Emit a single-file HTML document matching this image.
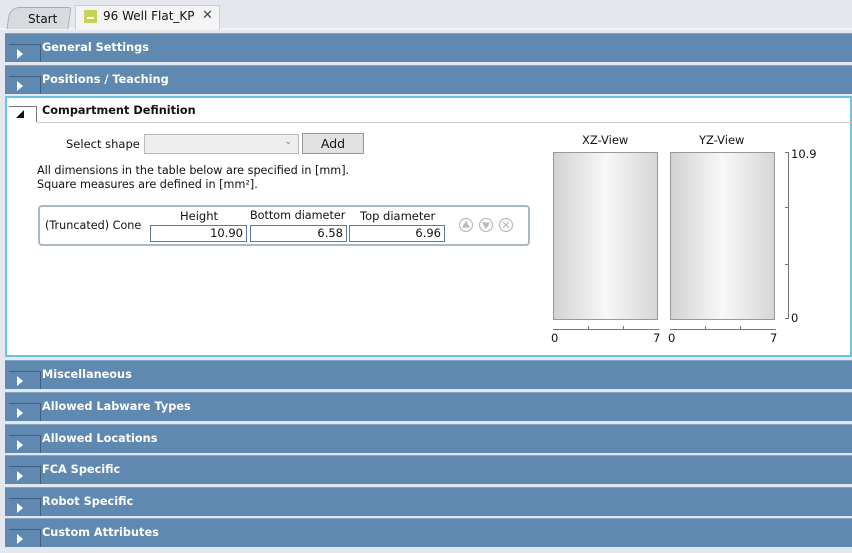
<!DOCTYPE html>
<html><head><style>
*{margin:0;padding:0;box-sizing:border-box}
body{width:852px;height:553px;background:#e4e7ee;font-family:"DejaVu Sans","Liberation Sans",sans-serif;font-size:11.5px;color:#111;position:relative;overflow:hidden}
.a{position:absolute}
.hdr{position:absolute;left:5px;width:847px;height:29px;background:#5f89b0;border-top:1px solid #7fa3c4}
.hdr .t{position:absolute;left:37px;top:7px;color:#fff;font-weight:bold;font-size:11.3px}
.hdr .b{position:absolute;left:4px;top:10px;width:32px;height:18px;border-top:1px solid #3f607f;border-right:1px solid #3f607f}
.hdr .b:after{content:"";position:absolute;left:8px;top:4px;border-left:6px solid #fff;border-top:5px solid transparent;border-bottom:5px solid transparent}
.inp{position:absolute;height:17px;border:1px solid #5a7a9a;background:#fff;text-align:right;padding-right:3px;font-size:11.5px;line-height:15px}
.view{position:absolute;top:152px;width:105px;height:168px;border:1px solid #999;background:linear-gradient(90deg,#d2d2d2,#f8f8f8 50%,#d6d6d6)}
</style></head><body>
<div class="a" style="left:0;top:28px;width:852px;height:2px;background:#f4f4f4"></div>
<div class="a" style="left:8px;top:7px;width:62px;height:22px;background:#d8dade;border:1px solid #a8acb2;border-bottom:none;border-radius:10px 3px 0 0;transform:skewX(-8deg)"></div>
<div class="a" style="left:28px;top:12px;font-size:12px">Start</div>
<div class="a" style="left:75px;top:5px;width:145px;height:25px;background:#f4f4f4;border:1px solid #ccc;border-bottom:none"></div>
<div class="a" style="left:84px;top:10px;width:13px;height:13px;background:#c9d15a;border-radius:1px"><div style="margin:7px 3px 0;height:2px;background:#fff"></div></div>
<div class="a" style="left:103px;top:9px;font-size:12px">96 Well Flat_KP</div>
<div class="a" style="left:202px;top:8px;font-size:13px;color:#444">✕</div>

<div class="hdr" style="top:33px"><div class="b"></div><div class="t">General Settings</div></div>
<div class="hdr" style="top:65px"><div class="b"></div><div class="t">Positions / Teaching</div></div>

<div class="a" style="left:5px;top:96px;width:847px;height:261px;background:#fff;border:2px solid #68c2e4"></div>
<div class="a" style="left:9px;top:106px;width:28px;height:16px;border-top:1px solid #777;border-right:1px solid #777"></div>
<div class="a" style="left:16px;top:110px;border-bottom:8px solid #111;border-left:8px solid transparent"></div>
<div class="a" style="left:37px;top:122px;width:815px;height:1px;background:#ccc"></div>
<div class="a" style="left:42px;top:104px;font-weight:bold;font-size:11.3px">Compartment Definition</div>

<div class="a" style="left:66px;top:137px">Select shape</div>
<div class="a" style="left:144px;top:134px;width:155px;height:20px;border:1px solid #bbb;background:#eee"><span style="position:absolute;right:6px;top:2px;font-size:9px;color:#777">⌄</span></div>
<div class="a" style="left:302px;top:133px;width:62px;height:21px;border:1px solid #999;background:#e2e2e2;text-align:center;line-height:19px;font-size:12.5px">Add</div>
<div class="a" style="left:37px;top:164px;line-height:14px;font-size:11.2px">All dimensions in the table below are specified in [mm].<br>Square measures are defined in [mm²].</div>

<div class="a" style="left:38px;top:205px;width:492px;height:41px;border:2px solid #aab8c8;border-radius:4px"></div>
<div class="a" style="left:45px;top:219px;font-size:11.2px">(Truncated) Cone</div>
<div class="a" style="left:180px;top:209px">Height</div>
<div class="a" style="left:250px;top:209px;font-size:11.2px">Bottom diameter</div>
<div class="a" style="left:360px;top:209px">Top diameter</div>
<div class="inp" style="left:150px;top:225px;width:97px">10.90</div>
<div class="inp" style="left:250px;top:225px;width:97px">6.58</div>
<div class="inp" style="left:349px;top:225px;width:96px">6.96</div>
<svg class="a" style="left:458px;top:217px" width="58" height="16" viewBox="0 0 58 16" fill="none" stroke="#bbb" stroke-width="1.2">
<circle cx="8" cy="8" r="6.5"/><path d="M5 10h6L8 5z" fill="#bbb"/>
<circle cx="28" cy="8" r="6.5"/><path d="M25 6h6L28 11z" fill="#bbb"/>
<circle cx="48" cy="8" r="6.5"/><path d="M45 5l6 6M51 5l-6 6"/>
</svg>

<div class="a" style="left:582px;top:133px">XZ-View</div>
<div class="a" style="left:699px;top:133px">YZ-View</div>
<div class="view" style="left:553px"></div>
<div class="view" style="left:670px"></div>
<div class="a" style="left:788px;top:152px;width:1px;height:167px;background:#777"></div>
<div class="a" style="left:785px;top:152px;width:4px;height:1px;background:#777"></div>
<div class="a" style="left:785px;top:207px;width:4px;height:1px;background:#777"></div>
<div class="a" style="left:785px;top:264px;width:4px;height:1px;background:#777"></div>
<div class="a" style="left:785px;top:318px;width:4px;height:1px;background:#777"></div>
<div class="a" style="left:791px;top:147px">10.9</div>
<div class="a" style="left:791px;top:311px">0</div>
<div class="a" style="left:553px;top:329px;width:106px;height:1px;background:#777"></div>
<div class="a" style="left:670px;top:329px;width:106px;height:1px;background:#777"></div>
<div class="a" style="left:588px;top:326px;width:1px;height:4px;background:#777"></div>
<div class="a" style="left:623px;top:326px;width:1px;height:4px;background:#777"></div>
<div class="a" style="left:705px;top:326px;width:1px;height:4px;background:#777"></div>
<div class="a" style="left:740px;top:326px;width:1px;height:4px;background:#777"></div>
<div class="a" style="left:551px;top:331px">0</div>
<div class="a" style="left:653px;top:331px">7</div>
<div class="a" style="left:668px;top:331px">0</div>
<div class="a" style="left:770px;top:331px">7</div>

<div class="hdr" style="top:360px"><div class="b"></div><div class="t">Miscellaneous</div></div>
<div class="hdr" style="top:392px"><div class="b"></div><div class="t">Allowed Labware Types</div></div>
<div class="hdr" style="top:424px"><div class="b"></div><div class="t">Allowed Locations</div></div>
<div class="hdr" style="top:455px"><div class="b"></div><div class="t">FCA Specific</div></div>
<div class="hdr" style="top:487px"><div class="b"></div><div class="t">Robot Specific</div></div>
<div class="hdr" style="top:518px"><div class="b"></div><div class="t">Custom Attributes</div></div>
</body></html>
